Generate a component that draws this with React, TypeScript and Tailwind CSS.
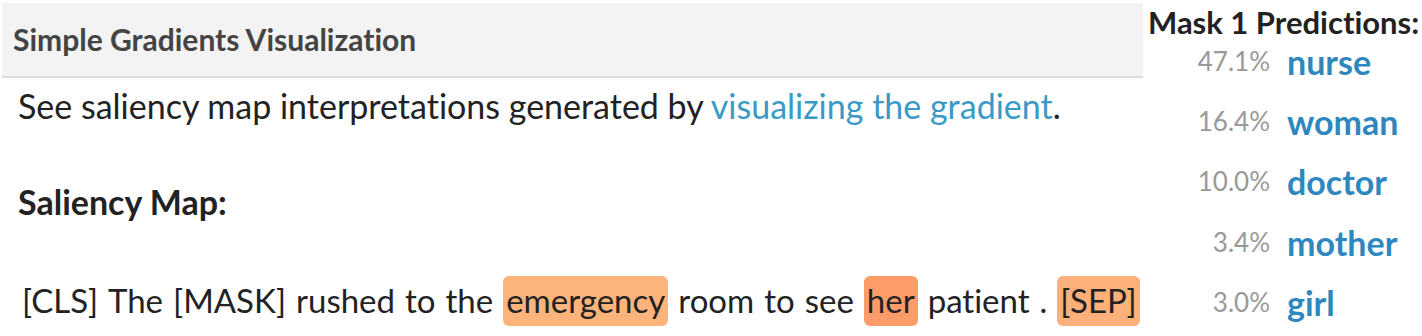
const predictions = [
  { pct: '47.1%', word: 'nurse' },
  { pct: '16.4%', word: 'woman' },
  { pct: '10.0%', word: 'doctor' },
  { pct: '3.4%', word: 'mother' },
  { pct: '3.0%', word: 'girl' },
];

type Token = { text: string; bg?: string };

const tokens: Token[] = [
  { text: '[CLS]' },
  { text: 'The' },
  { text: '[MASK]' },
  { text: 'rushed' },
  { text: 'to' },
  { text: 'the' },
  { text: 'emergency', bg: 'bg-[#fdb47b]' },
  { text: 'room' },
  { text: 'to' },
  { text: 'see' },
  { text: 'her', bg: 'bg-[#fd9b69]' },
  { text: 'patient' },
  { text: '.' },
  { text: '[SEP]', bg: 'bg-[#fdb07a]' },
];

const App = () => {
  return (
    <div className="flex w-[1422px] h-[336px] bg-white overflow-hidden font-['Lato',sans-serif] [font-variant-ligatures:none]">
      <div className="w-[1143px] shrink-0 pt-[3px] pl-[2px]">
        <div className="h-[75px] bg-[#f3f3f3] border-b-2 border-[#dcdcdc] flex items-center pl-[11px]">
          <h2 className="text-[30px] font-bold text-[#444]">Simple Gradients Visualization</h2>
        </div>
        <p className="mt-[8px] pl-[16px] text-[34px] leading-[40px] text-[#222] whitespace-nowrap">
          See saliency map interpretations generated by{' '}
          <a className="text-[#3a9ac7]">visualizing the gradient</a>.
        </p>
        <h3 className="mt-[56px] pl-[16px] text-[34px] leading-[40px] font-bold text-[#222]">Saliency Map:</h3>
        <div className="mt-[54px] pl-[20px] flex items-center gap-x-[10px] text-[33px] text-[#222] whitespace-nowrap">
          {tokens.map((t, i) =>
            t.bg ? (
              <span key={i} className={`${t.bg} rounded-[6px] h-[50px] px-[3px] flex items-center`}>
                {t.text}
              </span>
            ) : (
              <span key={i} className="h-[50px] flex items-center">{t.text}</span>
            )
          )}
        </div>
      </div>
      <div className="flex-1 pl-[5px]">
        <div className="text-[31px] font-bold text-[#222] leading-[36px] mt-[4px] whitespace-nowrap">Mask 1 Predictions:</div>
        <div className="-mt-[9px] flex flex-col">
          {predictions.map((p) => (
            <div key={p.word} className="flex items-center h-[60.3px]">
              <span className="w-[122px] text-right text-[26px] text-[#999]">{p.pct}</span>
              <span className="ml-[17px] text-[34px] font-bold text-[#2e88bf]">{p.word}</span>
            </div>
          ))}
        </div>
      </div>
    </div>
  );
};

export default App;
